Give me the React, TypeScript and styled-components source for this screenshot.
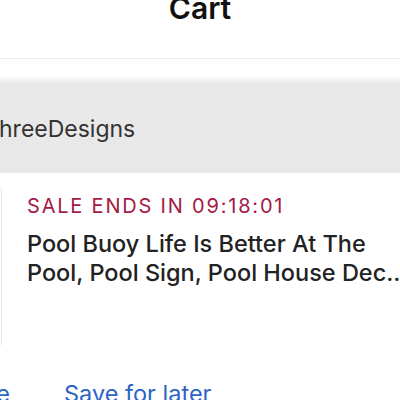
import React from "react";
import styled, { createGlobalStyle } from "styled-components";

const Global = createGlobalStyle`
  html, body { margin: 0; padding: 0; background: #fff; }
  body { width: 400px; height: 400px; overflow: hidden; font-family: Inter, "Noto Sans", sans-serif; }
`;

const Screen = styled.div`
  width: 400px;
  height: 400px;
  overflow: hidden;
  display: flex;
  flex-direction: column;
  background: #fff;
`;

const Header = styled.header`
  height: 58px;
  flex: none;
  display: flex;
  justify-content: center;
  align-items: flex-start;
  border-bottom: 1px solid #eeeeee;
`;

const Title = styled.h1`
  margin: -8px 0 0;
  font-size: 30px;
  line-height: 32px;
  font-weight: 600;
  color: #111;
`;

const ShopBand = styled.div`
  height: 114px;
  flex: none;
  display: flex;
  align-items: flex-end;
  padding-bottom: 32px;
  box-sizing: border-box;
  background: linear-gradient(to bottom, #ffffff 0px, #ffffff 16px, #e9e9e9 25px, #e8e8e8 100%);
`;

const ShopName = styled.span`
  margin-left: -1px;
  font-size: 23px;
  line-height: 24px;
  color: #333;
  font-weight: 400;
`;

const ItemRow = styled.div`
  display: flex;
  gap: 25px;
  padding-top: 13px;
`;

const Thumb = styled.div`
  flex: none;
  width: 160px;
  height: 158px;
  margin-left: -160px;
  border: 1px solid #e6e6e6;
  border-radius: 4px;
  background: #fff;
`;

const Info = styled.div`
  display: flex;
  flex-direction: column;
  min-width: 0;
  padding-top: 9px;
`;

const Sale = styled.div`
  font-size: 20px;
  line-height: 22px;
  letter-spacing: 1.8px;
  color: #a31a45;
  font-weight: 400;
`;

const ItemTitle = styled.div`
  margin-top: 12px;
  font-size: 23.5px;
  line-height: 29px;
  font-weight: 500;
  color: #222;
  white-space: nowrap;
`;

const Actions = styled.div`
  display: flex;
  gap: 54px;
  margin-top: 36px;
  margin-left: -100px;
`;

const Action = styled.span<{ $w?: number }>`
  font-size: 23.5px;
  line-height: 24px;
  color: #2c64c6;
  font-weight: 400;
  ${(p) => (p.$w ? `width: ${p.$w}px; text-align: right;` : "")}
`;

export default function App() {
  return (
    <>
      <Global />
      <Screen>
        <Header>
          <Title>Cart</Title>
        </Header>
        <ShopBand>
          <ShopName>hreeDesigns</ShopName>
        </ShopBand>
        <ItemRow>
          <Thumb />
          <Info>
            <Sale>SALE ENDS IN 09:18:01</Sale>
            <ItemTitle>
              Pool Buoy Life Is Better At The
              <br />
              Pool, Pool Sign, Pool House Dec...
            </ItemTitle>
          </Info>
        </ItemRow>
        <Actions>
          <Action $w={110}>Remove</Action>
          <Action>Save for later</Action>
        </Actions>
      </Screen>
    </>
  );
}
